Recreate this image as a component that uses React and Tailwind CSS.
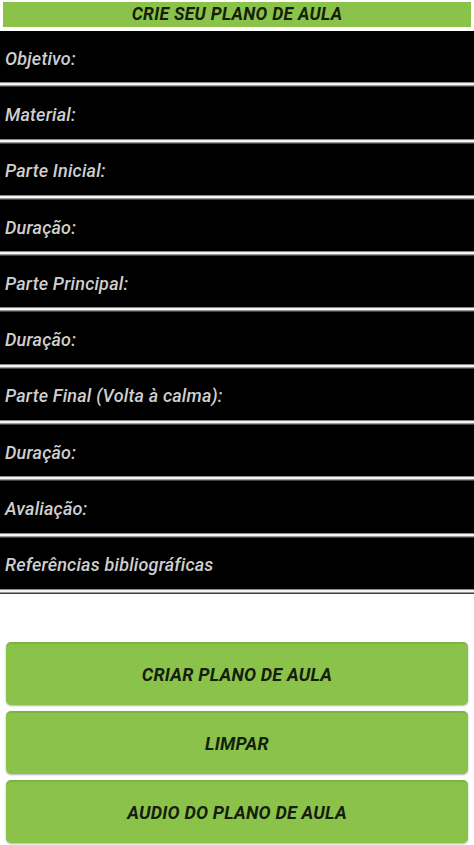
import React from "react";

const fields = [
  "Objetivo:",
  "Material:",
  "Parte Inicial:",
  "Duração:",
  "Parte Principal:",
  "Duração:",
  "Parte Final (Volta à calma):",
  "Duração:",
  "Avaliação:",
  "Referências bibliográficas",
];

const buttons = ["CRIAR PLANO DE AULA", "LIMPAR", "AUDIO DO PLANO DE AULA"];

export default function App() {
  return (
    <div
      className="w-[474px] h-[845px] bg-white overflow-hidden"
      style={{ fontFamily: "Roboto, 'Liberation Sans', sans-serif" }}
    >
      {/* header */}
      <div className="px-[3px] pt-[2px]">
        <div className="h-[25px] bg-[#8bc34a] flex items-center justify-center text-[17.5px] font-bold italic text-[#14200c] tracking-[0.3px]">
          CRIE SEU PLANO DE AULA
        </div>
      </div>

      {/* fields */}
      <div className="mt-[4px] flex flex-col">
        {fields.map((label, i) => (
          <div key={i} className="flex flex-col">
            <div className="h-[51.3px] bg-black flex items-center px-[5px] pt-[3px] text-[18px] italic font-medium text-[#cfcfcf] tracking-[0.2px]">
              {label}
            </div>
            <div className="h-[5px] flex flex-col">
              <div className="h-[1px] bg-[#8a8a8a]" />
              <div className="h-[2px] bg-[#f4f4f4]" />
              <div className="h-[1px] bg-[#9a9a9a]" />
              <div className="h-[1px] bg-[#404040]" />
            </div>
          </div>
        ))}
      </div>

      {/* buttons */}
      <div className="mt-[48px] px-[6px] flex flex-col gap-[6px]">
        {buttons.map((b) => (
          <div
            key={b}
            className="h-[63px] w-[462px] rounded-[5px] bg-[#8bc34a] border-t-2 border-[#7cb342] shadow-[0_1px_2px_rgba(0,0,0,0.3)] flex items-center justify-center text-[18px] font-bold italic text-[#14200c] tracking-[0.2px]"
          >
            {b}
          </div>
        ))}
      </div>
    </div>
  );
}
